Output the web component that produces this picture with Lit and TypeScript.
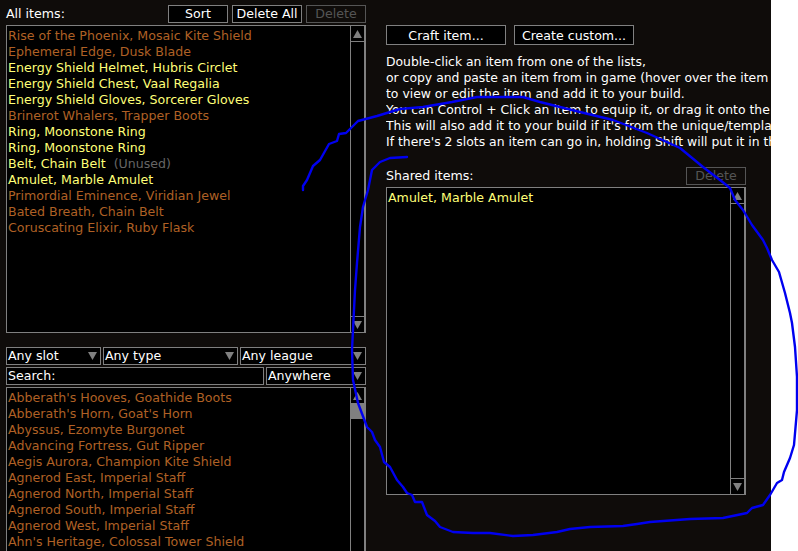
import { LitElement, html, css, svg } from "lit";
import { customElement } from "lit/decorators.js";

const U = "u", R = "r";
const allItems: [string, string, string?][] = [
  ["Rise of the Phoenix, Mosaic Kite Shield", U],
  ["Ephemeral Edge, Dusk Blade", U],
  ["Energy Shield Helmet, Hubris Circlet", R],
  ["Energy Shield Chest, Vaal Regalia", R],
  ["Energy Shield Gloves, Sorcerer Gloves", R],
  ["Brinerot Whalers, Trapper Boots", U],
  ["Ring, Moonstone Ring", R],
  ["Ring, Moonstone Ring", R],
  ["Belt, Chain Belt", R, "(Unused)"],
  ["Amulet, Marble Amulet", R],
  ["Primordial Eminence, Viridian Jewel", U],
  ["Bated Breath, Chain Belt", U],
  ["Coruscating Elixir, Ruby Flask", U],
];
const dbItems = [
  "Abberath's Hooves, Goathide Boots",
  "Abberath's Horn, Goat's Horn",
  "Abyssus, Ezomyte Burgonet",
  "Advancing Fortress, Gut Ripper",
  "Aegis Aurora, Champion Kite Shield",
  "Agnerod East, Imperial Staff",
  "Agnerod North, Imperial Staff",
  "Agnerod South, Imperial Staff",
  "Agnerod West, Imperial Staff",
  "Ahn's Heritage, Colossal Tower Shield",
];
const help = [
  "Double-click an item from one of the lists,",
  "or copy and paste an item from in game (hover over the item",
  "to view or edit the item and add it to your build.",
  "You can Control + Click an item to equip it, or drag it onto the",
  "This will also add it to your build if it's from the unique/templat",
  "If there's 2 slots an item can go in, holding Shift will put it in th",
];
const pts = "303,190 303,186 307,180 313,166 320,160 329,144 337,141 339,134 346,133 358,121 377,116 400,109 423,107 452,102 477,97 523,97 540,102 580,112 613,120 647,133 680,148 703,167 720,180 730,188 735,200 743,210 752,225 763,240 767,248 772,260 779,272 785,293 790,313 792,323 795,347 797,377 797,410 794,445 790,458 784,472 782,480 777,483 770,495 763,505 752,508 747,513 723,518 690,519 650,522 637,524 623,526 590,527 570,529 557,532 533,535 513,536 490,533 473,533 453,532 440,527 435,521 427,515 422,502 415,502 412,495 407,493 403,487 397,480 390,467 384,462 380,447 375,440 372,432 367,427 358,403 353,380 352,350 353,330 355,290 357,263 360,227 363,207 368,190 372,170 380,162 390,158 407,157";

@customElement("app-root")
export class AppRoot extends LitElement {
  static styles = css`
    :host { display: block; position: relative; width: 798px; height: 551px; background: #fff; overflow: hidden;
      font-family: "DejaVu Sans", sans-serif; font-size: 12.6px; line-height: 16px; color: #fff; }
    .panel { display: flex; width: 771px; height: 551px; background: #0f0c0a; overflow: hidden; }
    .left { flex: none; width: 360px; margin-left: 6px; padding-top: 5px; display: flex; flex-direction: column; }
    .right { flex: none; width: 385px; margin-left: 20px; padding-top: 25px; display: flex; flex-direction: column; overflow: hidden; }
    .head { display: flex; align-items: center; gap: 4px; height: 18px; margin-bottom: 2px; }
    .label { flex: 1; }
    .btn { box-sizing: border-box; height: 18px; width: 60px; border: 1px solid #808080; background: #000; text-align: center; line-height: 16px; }
    .btn.wide { width: 70px; }
    .btn.off { color: #555; border-color: #555; background: transparent; }
    .list { box-sizing: border-box; position: relative; flex: none; width: 360px; background: #000; border: 1px solid #808080; padding: 2px 0 0 1px; overflow: hidden; }
    .list.items { height: 308px; }
    .list.db { height: 200px; margin-top: 2px; }
    .row { height: 16px; white-space: nowrap; }
    .u { color: #af6025; }
    .r { color: #ffff77; }
    .note { color: #666; margin-left: 8px; }
    .bar { box-sizing: border-box; position: absolute; top: 0; right: 0; bottom: 0; width: 15px; border-left: 1px solid #808080; border-right: 1px solid #808080; display: flex; flex-direction: column; }
    .step { flex: none; height: 15px; display: flex; align-items: center; justify-content: center; }
    .step.up { border-bottom: 1px solid #808080; }
    .step.down { border-top: 1px solid #808080; margin-top: auto; }
    .step svg { width: 9px; height: 8px; fill: #808080; }
    .thumb { flex: none; height: 15px; background: #808080; }
    .filters { display: flex; gap: 2px; margin-top: 14px; }
    .filters + .filters { margin-top: 2px; }
    .sel { box-sizing: border-box; height: 18px; border: 1px solid #808080; background: #000; padding-left: 1px; display: flex; align-items: center; justify-content: space-between; white-space: nowrap; }
    .sel svg { width: 9px; height: 8px; fill: #808080; margin-right: 3px; flex: none; }
    .w95 { width: 95px; } .w135 { width: 135px; } .w126 { width: 126px; } .w258 { width: 258px; } .w100 { width: 100px; }
    .tools { display: flex; gap: 8px; }
    .tools .btn { width: 120px; height: 20px; line-height: 20px; }
    .help { margin-top: 8px; padding-top: 1px; height: 95px; white-space: nowrap; font-size: 12.4px; }
    .shared { display: flex; align-items: center; justify-content: space-between; width: 360px; height: 18px; margin: 18px 0 2px; }
    .list.sharedlist { height: 308px; }
    .ink { position: absolute; inset: 0; width: 798px; height: 551px; pointer-events: none; }
    .ink polyline { fill: none; stroke: #0000f0; stroke-width: 2.4; stroke-linejoin: round; stroke-linecap: round; }
  `;

  private up() { return html`<svg viewBox="0 0 9 8"><path d="M4.5 0 9 8H0z"/></svg>`; }
  private down() { return html`<svg viewBox="0 0 9 8"><path d="M0 0h9L4.5 8z"/></svg>`; }
  private sel(label: string, w: string) {
    return html`<div class="sel ${w}"><span>${label}</span>${this.down()}</div>`;
  }

  render() {
    return html`
      <div class="panel">
        <div class="left">
          <div class="head">
            <span class="label">All items:</span>
            <div class="btn">Sort</div>
            <div class="btn wide">Delete All</div>
            <div class="btn off">Delete</div>
          </div>
          <div class="list items">
            ${allItems.map(([t, c, n]) => html`<div class="row ${c}">${t}${n ? html`<span class="note">${n}</span>` : ""}</div>`)}
            <div class="bar">
              <div class="step up">${this.up()}</div>
              <div class="step down">${this.down()}</div>
            </div>
          </div>
          <div class="filters">
            ${this.sel("Any slot", "w95")}${this.sel("Any type", "w135")}${this.sel("Any league", "w126")}
          </div>
          <div class="filters">
            <div class="sel w258"><span>Search:</span></div>
            ${this.sel("Anywhere", "w100")}
          </div>
          <div class="list db">
            ${dbItems.map((t) => html`<div class="row u">${t}</div>`)}
            <div class="bar">
              <div class="step up">${this.up()}</div>
              <div class="thumb"></div>
            </div>
          </div>
        </div>
        <div class="right">
          <div class="tools"><div class="btn">Craft item...</div><div class="btn">Create custom...</div></div>
          <div class="help">${help.map((l) => html`<div class="row">${l}</div>`)}</div>
          <div class="shared"><span>Shared items:</span><div class="btn off">Delete</div></div>
          <div class="list sharedlist">
            <div class="row r">Amulet, Marble Amulet</div>
            <div class="bar">
              <div class="step up">${this.up()}</div>
              <div class="step down">${this.down()}</div>
            </div>
          </div>
        </div>
      </div>
      <svg class="ink" viewBox="0 0 798 551">${svg`<polyline points=${pts}></polyline>`}</svg>
    `;
  }
}
